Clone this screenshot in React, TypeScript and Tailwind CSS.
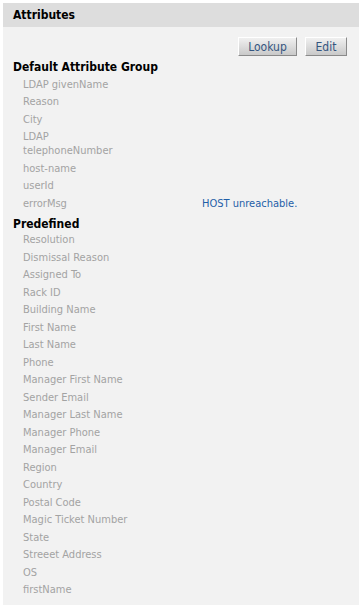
const defaultGroup: { label: string; value?: string }[] = [
  { label: "LDAP givenName" },
  { label: "Reason" },
  { label: "City" },
  { label: "LDAP telephoneNumber" },
  { label: "host-name" },
  { label: "userId" },
  { label: "errorMsg", value: "HOST unreachable." },
];

const predefined = [
  "Resolution",
  "Dismissal Reason",
  "Assigned To",
  "Rack ID",
  "Building Name",
  "First Name",
  "Last Name",
  "Phone",
  "Manager First Name",
  "Sender Email",
  "Manager Last Name",
  "Manager Phone",
  "Manager Email",
  "Region",
  "Country",
  "Postal Code",
  "Magic Ticket Number",
  "State",
  "Streeet Address",
  "OS",
  "firstName",
];

const font = "font-['DejaVu_Sans_Condensed','DejaVu_Sans',sans-serif]";

function Row({ label, value }: { label: string; value?: string }) {
  return (
    <div className="grid grid-cols-[189px_1fr] py-[1.75px] text-[11px] leading-[14px]">
      <div className="pl-[10px] text-[#a3a3a3]">
        <div className="w-[110px]">{label}</div>
      </div>
      <div className="text-[#1f5fa8]">{value}</div>
    </div>
  );
}

function Btn({ children, w }: { children: string; w: string }) {
  return (
    <button
      className={`${w} h-[19px] border border-t-white border-l-white border-r-[#8a8a8a] border-b-[#8a8a8a] bg-gradient-to-b from-[#f0f0f0] to-[#c9c9c9] text-[12px] leading-[16px] text-[#34557f]`}
    >
      {children}
    </button>
  );
}

export default function App() {
  return (
    <div className={`p-[3px] pr-[5px] bg-white ${font}`}>
      <div className="bg-[#f2f2f2] h-[602px]">
        <div className="bg-[#dddddd] h-[24px] flex items-center pl-[10px] text-[12px] font-bold text-black">
          Attributes
        </div>
        <div className="pt-[10px] pl-[10px]">
          <div className="flex justify-end gap-[8px] pr-[12px]">
            <Btn w="w-[59px]">Lookup</Btn>
            <Btn w="w-[42px]">Edit</Btn>
          </div>
          <div className="mt-[4px] text-[12px] leading-[15px] font-bold text-black">Default Attribute Group</div>
          <div className="mt-[1px]">
            {defaultGroup.map((r) => (
              <Row key={r.label} label={r.label} value={r.value} />
            ))}
          </div>
          <div className="mt-[4px] text-[12px] leading-[15px] font-bold text-black">Predefined</div>
          <div>
            {predefined.map((l) => (
              <Row key={l} label={l} />
            ))}
          </div>
        </div>
      </div>
    </div>
  );
}
